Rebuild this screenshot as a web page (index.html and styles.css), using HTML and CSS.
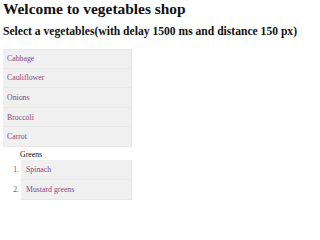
FILE: index.html
```html
<!DOCTYPE html>
<html>
<head>
<meta charset="utf-8">
<link rel="stylesheet" href="styles.css">
</head>
<body>
<h1 class="title">Welcome to vegetables shop</h1>
<h2 class="subtitle">Select a vegetables(with delay 1500 ms and distance 150 px)</h2>
<ul class="menu">
  <li class="item"><a class="link">Cabbage</a></li>
  <li class="item"><a class="link">Cauliflower</a></li>
  <li class="item"><a class="link">Onions</a></li>
  <li class="item"><a class="link">Broccoli</a></li>
  <li class="item"><a class="link">Carrot</a></li>
</ul>
<div class="group">Greens</div>
<ol class="sub">
  <li class="item"><a class="link">Spinach</a></li>
  <li class="item"><a class="link">Mustard greens</a></li>
</ol>
</body>
</html>
```
FILE: styles.css
```css
html, body { margin: 0; padding: 0; background: #fff; }
body {
  padding: 0 3px;
  font-family: "Liberation Serif", "Times New Roman", serif;
  color: #111;
}
.title {
  margin: 0;
  font-size: 15.4px;
  line-height: 18px;
  font-weight: bold;
}
.subtitle {
  margin: 7px 0 0;
  font-size: 11.6px;
  line-height: 14px;
  font-weight: bold;
  white-space: nowrap;
}
.menu {
  list-style: none;
  margin: 10px 0 0;
  padding: 0;
  width: 129px;
  background: #f1f0f1;
  border-right: 1px solid #e4e4e4;
  box-sizing: border-box;
}
.item {
  height: 19.6px;
  border-bottom: 1px solid #e9e8e9;
  box-sizing: border-box;
  display: flex;
  align-items: center;
  font-size: 7.8px;
}
.menu .item:first-child { border-top: 1px solid #e9e8e9; }
.link {
  color: #84457f;
  padding-left: 4px;
}
.group {
  font-size: 7.8px;
  line-height: 10px;
  margin: 3px 0 0 17px;
  color: #111;
}
.sub {
  margin: 0;
  padding: 0 0 0 18px;
  width: 129px;
  box-sizing: border-box;
  font-size: 7.8px;
}
.sub .item {
  display: list-item;
  background: #f1f0f1;
  line-height: 19px;
  height: 20px;
  border-right: 1px solid #e4e4e4;
  color: #6f5a6f;
}
.sub .link { padding-left: 5px; }
```
